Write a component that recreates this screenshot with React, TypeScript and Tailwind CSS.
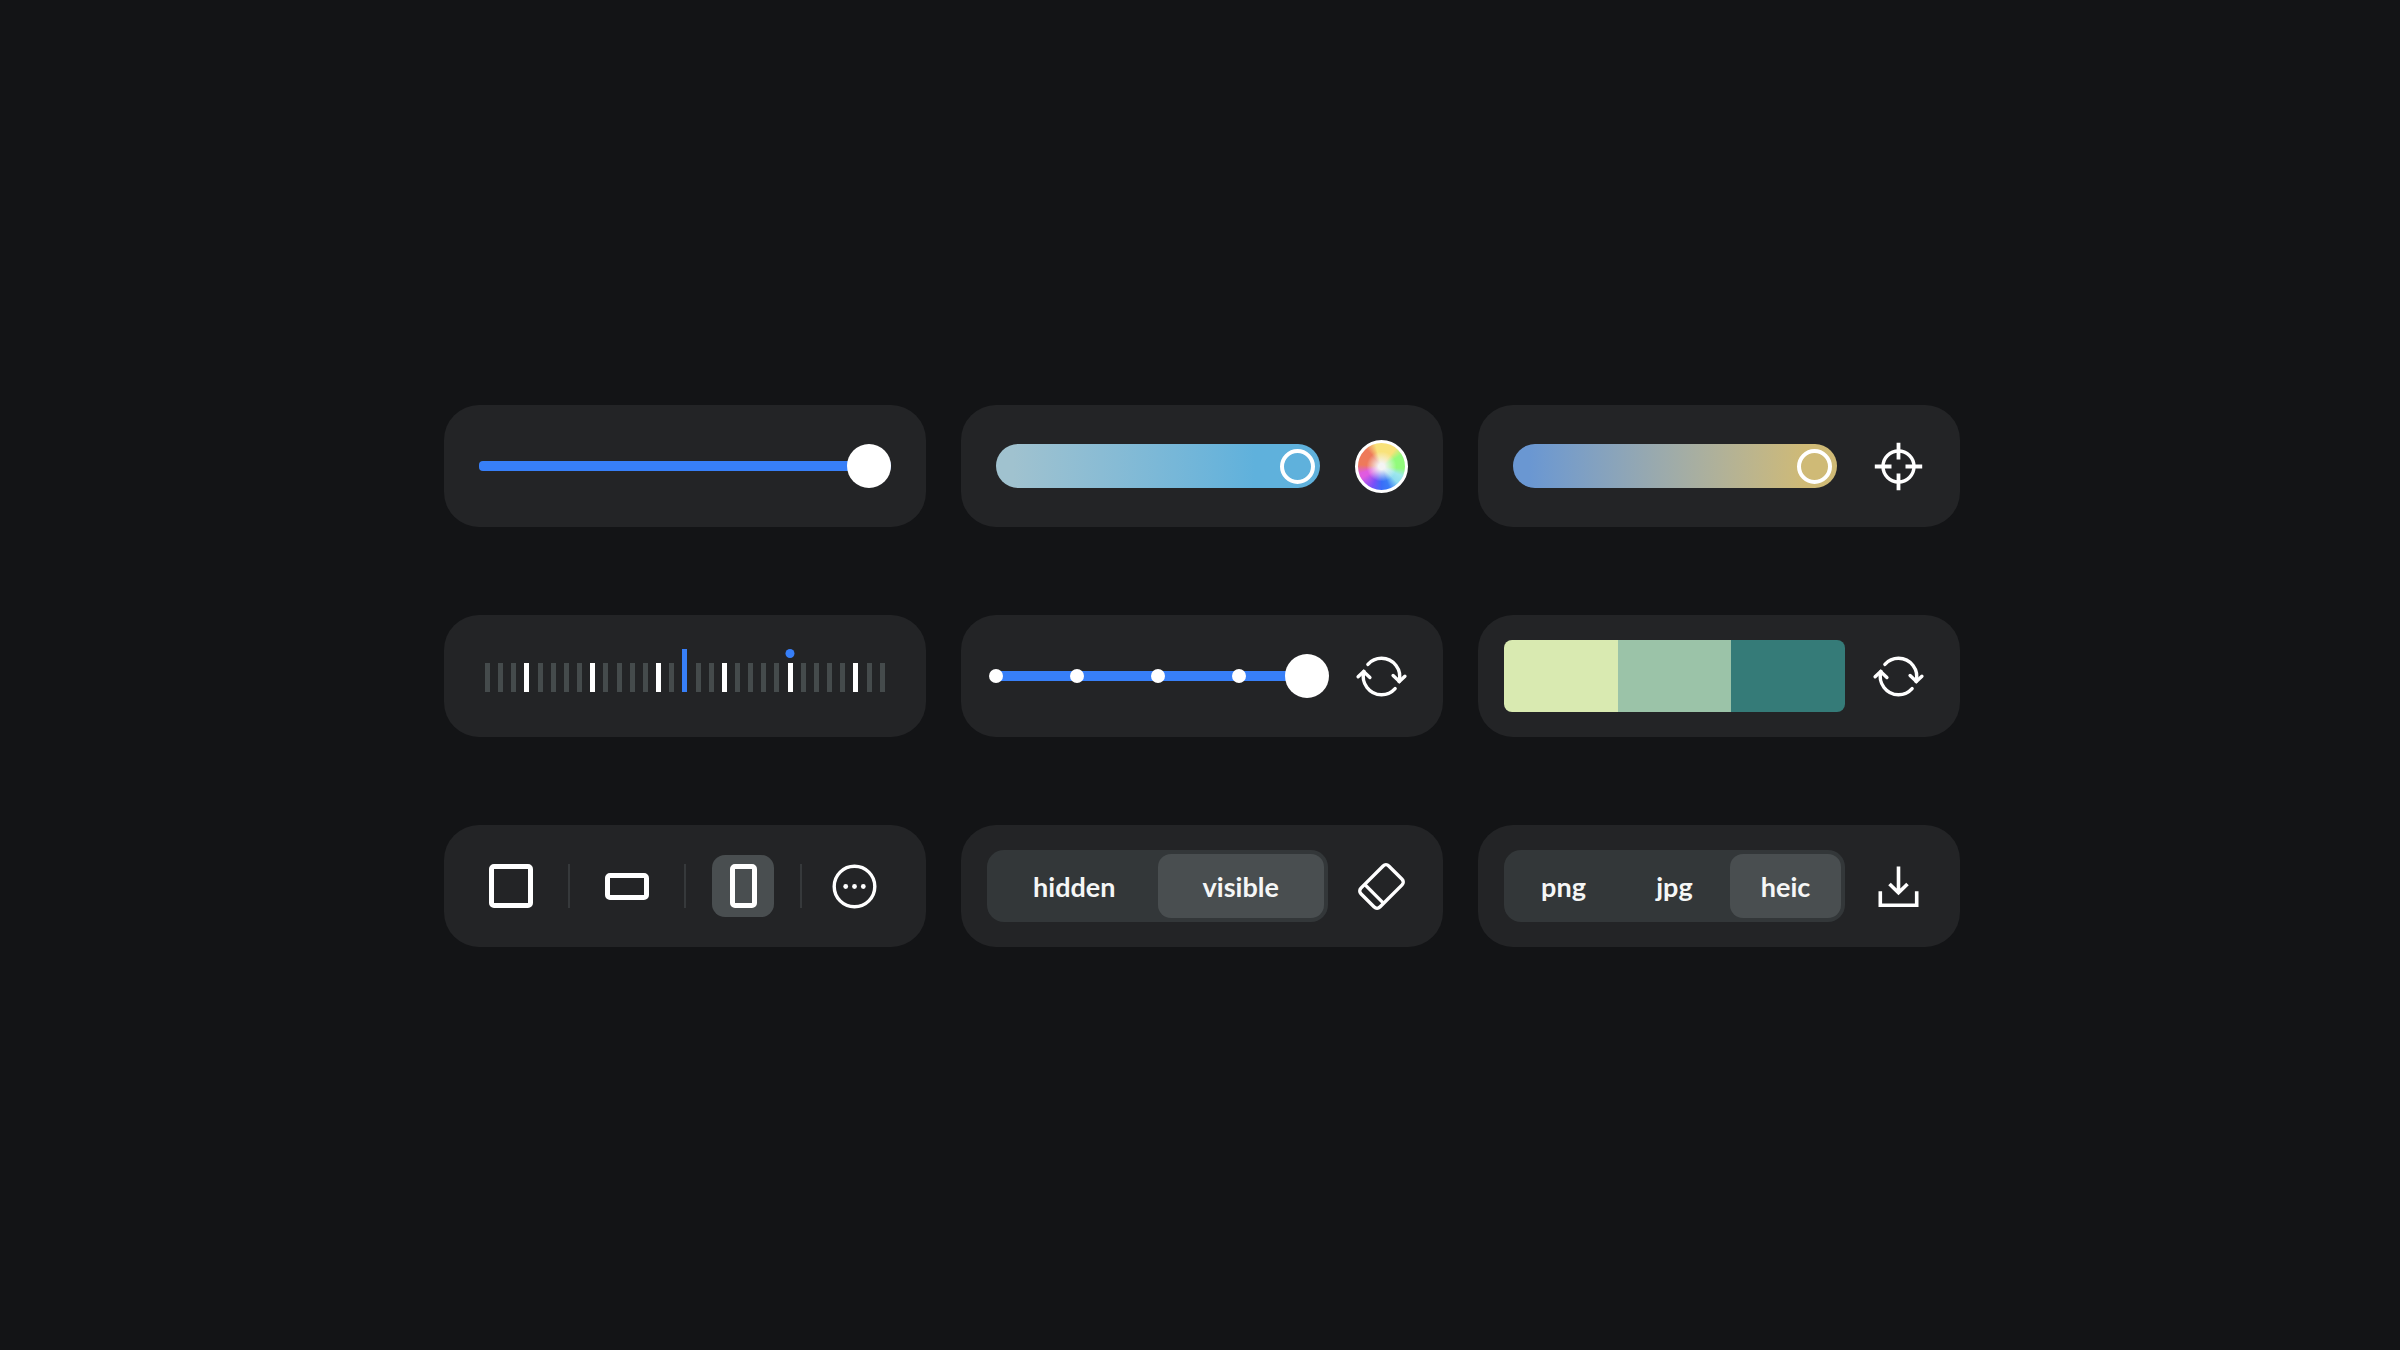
import { useState, type CSSProperties, type ReactNode } from 'react';
import clsx from 'clsx';

const THUMB =
  '[&::-webkit-slider-thumb]:appearance-none [&::-webkit-slider-thumb]:size-[44px] [&::-webkit-slider-thumb]:rounded-full [&::-webkit-slider-thumb]:bg-white';
const RING_THUMB =
  '[&::-webkit-slider-thumb]:appearance-none [&::-webkit-slider-thumb]:size-[35px] [&::-webkit-slider-thumb]:rounded-full [&::-webkit-slider-thumb]:border-[4px] [&::-webkit-slider-thumb]:border-solid [&::-webkit-slider-thumb]:border-white';

const Card = ({ className, children }: { className?: string; children: ReactNode }) => (
  <section className={clsx('flex h-[122px] items-center rounded-[35px] bg-[#232426]', className)}>{children}</section>
);

const IconButton = ({ label, children }: { label: string; children: ReactNode }) => (
  <button type="button" aria-label={label} className="size-[53px] shrink-0 cursor-pointer">
    <svg viewBox="-26.5 -26.5 53 53" fill="none" stroke="white" strokeWidth="3.4" className="size-full">
      {children}
    </svg>
  </button>
);

const ResetButton = ({ label }: { label: string }) => (
  <IconButton label={label}>
    <g strokeLinecap="round">
      <path d="M-13.6 -12.1A18.2 18.2 0 0 1 0 -18.2A18.2 18.2 0 0 1 17.5 5" />
      <path d="M11.6 -1L17.9 5L23.4 -0.3" />
      <path d="M13.6 12.1A18.2 18.2 0 0 1 0 18.2A18.2 18.2 0 0 1 -17.5 -5" />
      <path d="M-11.6 1L-17.9 -5L-23.4 0.3" />
    </g>
  </IconButton>
);

function PlainSlider() {
  const [value, setValue] = useState(100);

  return (
    <Card className="px-[35px]">
      <input
        type="range"
        aria-label="Amount"
        value={value}
        onChange={(e) => setValue(Number(e.target.value))}
        style={{ '--fill': `${value}%` } as CSSProperties}
        className={clsx(
          'h-[44px] w-full cursor-pointer appearance-none bg-transparent',
          '[&::-webkit-slider-runnable-track]:h-[10px] [&::-webkit-slider-runnable-track]:rounded-[4px]',
          '[&::-webkit-slider-runnable-track]:bg-[linear-gradient(to_right,#377ff8_var(--fill),#494e50_var(--fill))]',
          '[&::-webkit-slider-thumb]:-mt-[17px]',
          THUMB,
        )}
      />
    </Card>
  );
}

function ColorSlider({ label, gradient, children }: { label: string; gradient: string; children: ReactNode }) {
  return (
    <Card className="gap-[35px] px-[35px]">
      <input
        type="range"
        aria-label={label}
        defaultValue={100}
        className={clsx('h-[44px] min-w-0 flex-1 cursor-pointer appearance-none rounded-full px-[5px]', gradient, RING_THUMB)}
      />
      {children}
    </Card>
  );
}

function Ruler() {
  const [value, setValue] = useState(15);

  return (
    <Card className="px-[41px]">
      <div className="relative mb-[11px] flex h-[43px] w-full items-end justify-between">
        {Array.from({ length: 31 }, (_, i) => (
          <span
            key={i}
            className={clsx(
              'relative w-[5px]',
              i === value ? 'h-[43px] bg-[#377ff8]' : i % 5 === 3 ? 'h-[29px] bg-white' : 'h-[29px] bg-[#454b4c]',
            )}
          >
            {i === 23 && <span className="absolute -top-[14px] left-1/2 size-[9px] -translate-x-1/2 rounded-full bg-[#377ff8]" />}
          </span>
        ))}
        <input
          type="range"
          aria-label="Rotation"
          min={0}
          max={30}
          value={value}
          onChange={(e) => setValue(Number(e.target.value))}
          className="absolute inset-0 size-full cursor-pointer opacity-0"
        />
      </div>
    </Card>
  );
}

function StepSlider() {
  return (
    <Card className="gap-[26px] pr-[35px] pl-[28px]">
      <div className="relative flex h-[44px] min-w-0 flex-1 items-center">
        <div className="mx-[7px] h-[10px] flex-1 bg-[#377ff8]" />
        <div className="absolute inset-y-0 right-[2px] left-0 flex items-center justify-between">
          {[0, 1, 2, 3, 4].map((step) => (
            <span key={step} className="size-[14px] rounded-full bg-white" />
          ))}
        </div>
        <input
          type="range"
          aria-label="Step"
          min={0}
          max={4}
          defaultValue={4}
          className={clsx('absolute inset-0 size-full cursor-pointer appearance-none bg-transparent', THUMB)}
        />
      </div>
      <ResetButton label="Reset step" />
    </Card>
  );
}

function Palette() {
  return (
    <Card className="gap-[27px] pr-[35px] pl-[26px]">
      <div className="grid h-[72px] min-w-0 flex-1 grid-cols-3 overflow-hidden rounded-[8px]">
        <button type="button" aria-label="Lime" className="bg-[#d9eab1]" />
        <button type="button" aria-label="Sage" className="bg-[#9bc3a8]" />
        <button type="button" aria-label="Teal" className="bg-[#357b78]" />
      </div>
      <ResetButton label="Shuffle palette" />
    </Card>
  );
}

const RATIOS = [
  { id: 'square', label: 'Square', shape: 'h-[44px] w-[44px]' },
  { id: 'landscape', label: 'Landscape', shape: 'h-[27px] w-[44px]' },
  { id: 'portrait', label: 'Portrait', shape: 'h-[44px] w-[27px]' },
];

function AspectRatio() {
  return (
    <Card className="gap-[26px] pl-[36px]">
      {RATIOS.map((ratio) => (
        <div key={ratio.id} className="flex items-center gap-[26px]">
          <label className="grid size-[62px] cursor-pointer place-items-center rounded-[13px] has-checked:bg-[#494e50]">
            <input type="radio" name="ratio" aria-label={ratio.label} defaultChecked={ratio.id === 'portrait'} className="sr-only" />
            <span className={clsx('rounded-[5px] border-[5px] border-white', ratio.shape)} />
          </label>
          <span className="h-[44px] w-[2px] bg-[#36393b]" />
        </div>
      ))}
      <IconButton label="More ratios">
        <circle r="20.3" />
        <g fill="white" stroke="none">
          <circle cx="-8.8" r="2.4" />
          <circle r="2.4" />
          <circle cx="8.8" r="2.4" />
        </g>
      </IconButton>
    </Card>
  );
}

function Segmented({ name, options, selected, children }: { name: string; options: string[]; selected: string; children: ReactNode }) {
  return (
    <Card className="gap-[27px] pr-[35px] pl-[26px]">
      <div className="flex h-[72px] min-w-0 flex-1 rounded-[17px] bg-[#333739] p-[4px]">
        {options.map((option) => (
          <label
            key={option}
            className="grid flex-1 basis-0 cursor-pointer place-items-center rounded-[13px] pt-[2px] text-[27px] leading-8 font-bold text-[#f5f6f6] has-checked:bg-[#494e50]"
          >
            <input type="radio" name={name} value={option} defaultChecked={option === selected} className="sr-only" />
            {option}
          </label>
        ))}
      </div>
      {children}
    </Card>
  );
}

export default function App() {
  return (
    <main className="grid min-h-screen place-items-center bg-[#131416] pt-[2px] pl-[4px] font-['Lato','Liberation_Sans',sans-serif]">
      <div className="grid w-full max-w-[1516px] grid-cols-1 gap-x-[35px] gap-y-[88px] lg:grid-cols-3">
        <PlainSlider />

        <ColorSlider label="Tint" gradient="bg-linear-to-r from-[#a0c2cf] from-5% to-[#5fb1dc] to-80%">
          <button
            type="button"
            aria-label="Pick a color"
            className="size-[53px] shrink-0 cursor-pointer rounded-full border-[3px] border-white bg-[radial-gradient(circle,#f4f4f4_8%,#f4f4f400_40%),conic-gradient(#f8e27a_0deg,#f8e27a_38deg,#92fb7c_60deg,#92fb7c_95deg,#9de8ec_115deg,#8fdcf0_135deg,#3a7cf6_160deg,#3a6cf8_180deg,#7a4ff8_205deg,#e05be0_240deg,#e05be0_252deg,#ee7a5a_275deg,#ee7a5a_320deg,#f8e27a_345deg)] bg-origin-border"
          />
        </ColorSlider>

        <ColorSlider label="Temperature" gradient="bg-linear-to-r from-[#6a97d2] from-5% to-[#cfba76] to-90%">
          <IconButton label="Sample color">
            <circle r="15.5" />
            <path d="M0 -23.7V-7M0 23.7V7M-23.7 0H-7M23.7 0H7" strokeWidth="3.8" />
          </IconButton>
        </ColorSlider>

        <Ruler />
        <StepSlider />
        <Palette />
        <AspectRatio />

        <Segmented name="visibility" options={['hidden', 'visible']} selected="visible">
          <IconButton label="Erase">
            <g transform="rotate(-45)">
              <rect x="-19.7" y="-13.4" width="39.4" height="26.8" rx="4" />
              <path d="M-10.4 -13.4V13.4" />
            </g>
          </IconButton>
        </Segmented>

        <Segmented name="format" options={['png', 'jpg', 'heic']} selected="heic">
          <IconButton label="Download">
            <path d="M0 -20V6M-9 -2.5L0 6.3L9 -2.5M-18.2 4.7V18.8H18.2V4.7" strokeWidth="3.6" />
          </IconButton>
        </Segmented>
      </div>
    </main>
  );
}
